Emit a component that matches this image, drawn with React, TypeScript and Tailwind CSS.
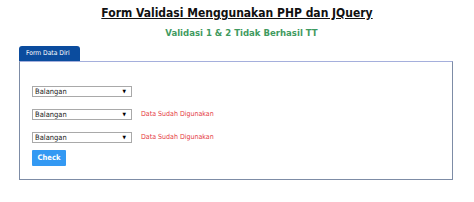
import React from "react"

function Pilih() {
  return (
    <div className="relative w-[100px] h-[11px] border border-[#a9a9a9] bg-white">
      <span className="absolute left-[2px] top-[-1px] text-[7.5px] leading-[11px] text-[#222]">Balangan</span>
      <span className="absolute right-[5px] top-[-1px] text-[5px] leading-[11px] text-black">▼</span>
    </div>
  )
}

export default function App() {
  return (
    <div className="w-[474px] h-[202px] bg-white font-['DejaVu_Sans_Condensed','DejaVu_Sans',sans-serif]">
      <div className="pt-[6px] text-center">
        <h1 className="text-[12px] leading-[14px] font-bold underline text-[#111]">
          Form Validasi Menggunakan PHP dan JQuery
        </h1>
        <h2 className="mt-[7px] pl-[9px] text-[9.5px] leading-[12px] font-bold text-[#3f9a60]">
          Validasi 1 &amp; 2 Tidak Berhasil TT
        </h2>
      </div>
      <div className="mt-[7px] ml-[19px] w-[434px]">
        <div className="w-[61px] h-[15px] rounded-t-[3px] bg-[#0b4c9e] text-white text-[6.7px] leading-[15px] pl-[7px]">
          Form Data Diri
        </div>
        <div className="h-[119px] border border-[#7d8ca6] border-t-[#a5afdc] pl-[12px] pt-[24px]">
          <div className="flex flex-col gap-[12px]">
            <div className="flex items-center">
              <Pilih />
            </div>
            <div className="flex items-center gap-[9px]">
              <Pilih />
              <span className="text-[7px] leading-[11px] text-[#e53a3f]">Data Sudah Digunakan</span>
            </div>
            <div className="flex items-center gap-[9px]">
              <Pilih />
              <span className="text-[7px] leading-[11px] text-[#e53a3f]">Data Sudah Digunakan</span>
            </div>
          </div>
          <button className="mt-[7px] w-[34px] h-[16px] bg-[#3399f3] text-white text-[7.5px] font-bold leading-[16px] rounded-[1px]">
            Check
          </button>
        </div>
      </div>
    </div>
  )
}
